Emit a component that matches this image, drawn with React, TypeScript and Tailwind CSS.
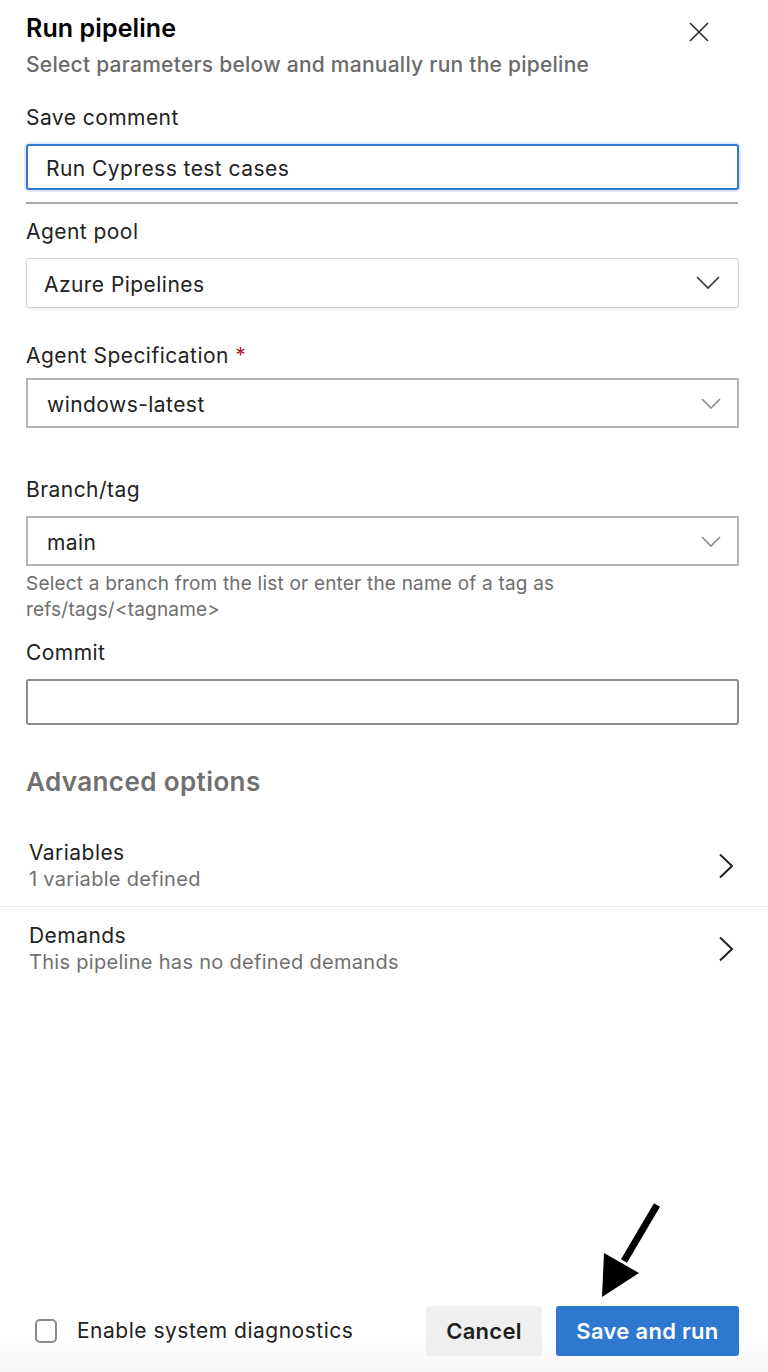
import React from 'react';

const font = { fontFamily: 'Inter, "Noto Sans", sans-serif' };

const ChevronDown = ({ light }: { light?: boolean }) => (
  <svg
    width={light ? 20 : 24}
    height={light ? 11 : 14}
    viewBox={light ? '0 0 20 11' : '0 0 24 14'}
    fill="none"
    stroke={light ? '#8a8a8a' : '#333'}
    strokeWidth={1.6}
  >
    {light ? <path d="M1 1l9 9 9-9" /> : <path d="M1 1l11 11L23 1" />}
  </svg>
);

const ChevronRight = () => (
  <svg width="16" height="26" viewBox="0 0 16 26" fill="none" stroke="#222" strokeWidth={2}>
    <path d="M2 1.5l12 11.5L2 24.5" />
  </svg>
);

const Select = ({ value, rounded, light }: { value: string; rounded?: boolean; light?: boolean }) => (
  <div
    className={`h-[50px] flex items-center justify-between bg-white ${
      rounded
        ? 'rounded-[3px] border border-[#d2d2d2] shadow-[0_1px_2px_rgba(0,0,0,0.08)] pl-[17px] pr-[18px]'
        : 'border-2 border-[#b4b4b4] pl-[19px] pr-[16px]'
    }`}
  >
    <span className="pt-[4px] text-[21px] tracking-[0.45px] text-[#222]">{value}</span>
    <ChevronDown light={light} />
  </div>
);

const Label = ({ children, className = '' }: { children: React.ReactNode; className?: string }) => (
  <div className={`text-[21px] leading-[26px] tracking-[0.45px] text-[#222] ${className}`}>{children}</div>
);

export default function App() {
  return (
    <div className="relative w-[768px] h-[1372px] bg-white flex flex-col overflow-hidden" style={font}>
      {/* header */}
      <div className="pl-[26px] pr-[29px] pt-[12px] flex justify-between items-start">
        <div>
          <h1 className="text-[25px] leading-[32px] font-semibold tracking-[0.1px] text-black">Run pipeline</h1>
          <p className="mt-[8px] text-[21px] leading-[26px] font-medium tracking-[0.25px] text-[#6b6b6b]">
            Select parameters below and manually run the pipeline
          </p>
        </div>
        <button className="mt-[10px] mr-[30px] p-0">
          <svg width="20" height="20" viewBox="0 0 20 20" fill="none" stroke="#333" strokeWidth={1.7}>
            <path d="M1 1l18 18M19 1L1 19" />
          </svg>
        </button>
      </div>

      <div className="pl-[26px] pr-[29px]">
        <Label className="mt-[27px]">Save comment</Label>
        <div className="mt-[13px] rounded-[4px] ring-[2px] ring-[#dfe9f6]">
          <div className="h-[46px] rounded-[3px] border-2 border-[#2f78d0] flex items-center pl-[18px]">
            <span className="pt-[4px] text-[21px] tracking-[0.45px] text-[#222]">Run Cypress test cases</span>
          </div>
        </div>
        <div className="mt-[12px] h-[2px] bg-[#a9a9a9] mr-[1px]" />

        <Label className="mt-[15px]">Agent pool</Label>
        <div className="mt-[13px]">
          <Select value="Azure Pipelines" rounded />
        </div>

        <Label className="mt-[35px]">
          Agent Specification <span className="text-[#a4262c]">*</span>
        </Label>
        <div className="mt-[9px]">
          <Select value="windows-latest" light />
        </div>

        <Label className="mt-[49px]">Branch/tag</Label>
        <div className="mt-[13px]">
          <Select value="main" light />
        </div>
        <p className="mt-[5px] text-[19px] leading-[26px] tracking-[0.2px] text-[#6e6e6e]">
          Select a branch from the list or enter the name of a tag as
          <br />
          refs/tags/&lt;tagname&gt;
        </p>

        <Label className="mt-[17px]">Commit</Label>
        <div className="mt-[13px] h-[46px] rounded-[3px] border-2 border-[#8c8c8c] bg-white" />

        <h2 className="mt-[41px] text-[26px] leading-[32px] font-semibold tracking-[0.4px] text-[#707070]">
          Advanced options
        </h2>
      </div>

      {/* advanced rows */}
      <div className="mt-[42px]">
        <div className="pl-[29px] pr-[34px] flex items-center justify-between pb-[14px]">
          <div>
            <div className="text-[21px] leading-[26px] tracking-[0.45px] text-[#222]">Variables</div>
            <div className="text-[20px] leading-[26px] tracking-[0.3px] text-[#707070]">1 variable defined</div>
          </div>
          <ChevronRight />
        </div>
        <div className="h-[1px] bg-[#ebebeb]" />
        <div className="pl-[29px] pr-[34px] flex items-center justify-between pt-[16px]">
          <div>
            <div className="text-[21px] leading-[26px] tracking-[0.45px] text-[#222]">Demands</div>
            <div className="text-[20px] leading-[26px] tracking-[0.3px] text-[#707070]">
              This pipeline has no defined demands
            </div>
          </div>
          <ChevronRight />
        </div>
      </div>

      {/* footer */}
      <div className="mt-auto pl-[35px] pr-[29px] pb-[16px] flex items-center justify-between bg-gradient-to-b from-white via-white to-[#f6f6f6]">
        <label className="flex items-center gap-[20px]">
          <span className="w-[22px] h-[24px] rounded-[5px] border-2 border-[#8a8a8a] bg-white" />
          <span className="text-[21px] tracking-[0.5px] text-[#222]">Enable system diagnostics</span>
        </label>
        <div className="flex gap-[14px]">
          <button className="w-[116px] h-[50px] rounded-[3px] bg-[#efefef] text-[22px] tracking-[0.3px] font-semibold text-[#1e1e1e]">
            Cancel
          </button>
          <button className="w-[183px] h-[50px] rounded-[3px] bg-[#2f78d0] text-[22px] tracking-[0.3px] font-semibold text-white">
            Save and run
          </button>
        </div>
      </div>

      {/* annotation arrow */}
      <svg className="absolute left-[590px] top-[1195px]" width="80" height="110" viewBox="0 0 80 110">
        <path d="M67 10L34 66" stroke="#000" strokeWidth={7} />
        <path d="M14 58L49 78L12 102Z" fill="#000" />
      </svg>
    </div>
  );
}
